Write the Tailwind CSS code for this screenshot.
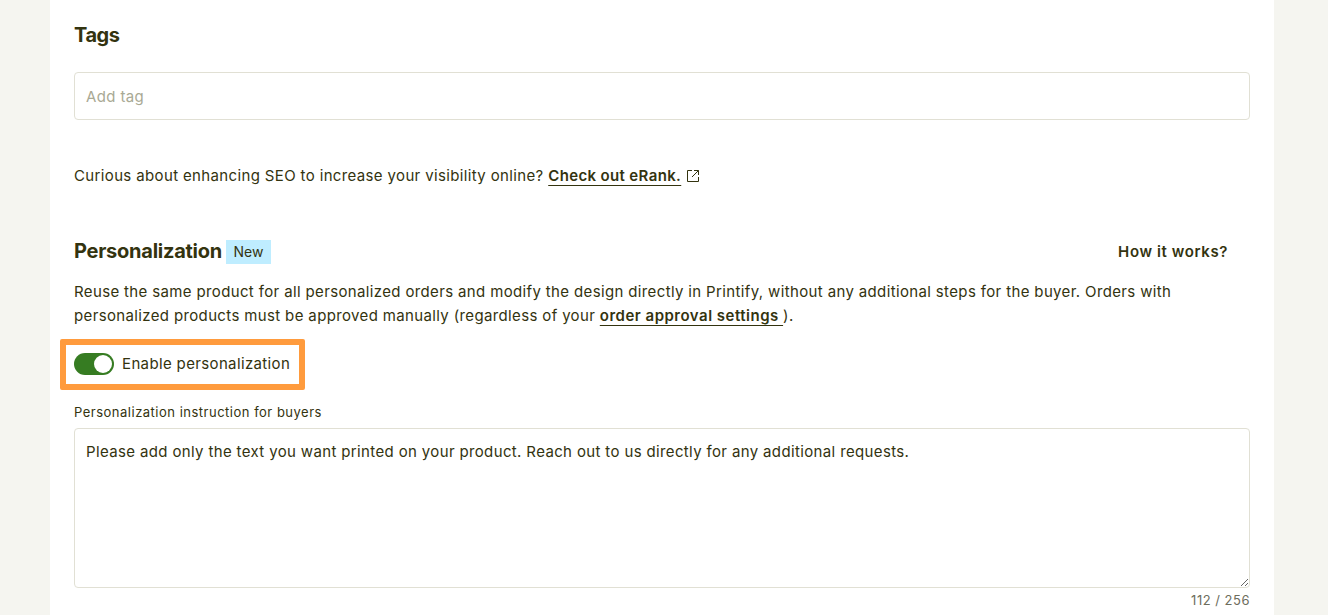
<!DOCTYPE html>
<html lang="en">
<head>
    <meta charset="UTF-8">
    <meta name="viewport" content="width=device-width, initial-scale=1.0">
    <title>Product details</title>
    <script src="https://cdn.jsdelivr.net/npm/@tailwindcss/browser@4"></script>
</head>
<body class="bg-[#f5f5f0] text-[#33330f] font-['Inter',sans-serif] text-[15px] leading-6 tracking-[0.36px] h-[615px] overflow-hidden">
    <div class="ml-[50px] w-[1224px] bg-white px-6 pt-6 h-[615px]">
        <h2 class="text-xl leading-[22px] pb-0.5 font-bold tracking-[-0.45px]">Tags</h2>
        <input type="text" placeholder="Add tag" class="mt-6 block w-full h-12 px-[11px] border border-[#e1e0d4] rounded placeholder:text-[#a9a994] outline-none">
        <p class="mt-11">
            Curious about enhancing SEO to increase your visibility online?
            <a href="#" class="font-semibold underline underline-offset-4">Check out eRank.</a>
            <svg class="inline-block w-[14px] h-[14px] align-[-2px]" viewBox="0 0 14 14" fill="none" stroke="#33330f" stroke-width="1"><path d="M6 1.5H1.5v11h11V8M8 1.5h4.5V6M12.5 1.5 6 8"/></svg>
        </p>
        <div class="mt-[52px] flex items-center justify-between">
            <div class="flex items-center gap-1">
                <h2 class="text-xl leading-[22px] pb-0.5 font-bold tracking-[-0.25px]">Personalization</h2>
                <span class="bg-[#bfedff] w-[45px] text-center h-6 text-sm leading-6 tracking-normal">New</span>
            </div>
            <a href="#" class="font-semibold mr-[22px] tracking-[0.6px]">How it works?</a>
        </div>
        <p class="mt-4">Reuse the same product for all personalized orders and modify the design directly in Printify, without any additional steps for the buyer. Orders with personalized products must be approved manually (regardless of your <a href="#" class="font-semibold underline underline-offset-4 tracking-[0.5px]">order approval settings </a>).</p>
        <div class="relative mt-[25px] flex items-center gap-2 h-[22px]">
            <span class="flex justify-end items-center w-10 h-[22px] rounded-full bg-[#367c22] p-0.5">
                <span class="w-[18px] h-[18px] rounded-full bg-white"></span>
            </span>
            <span>Enable personalization</span>
            <div class="absolute left-[-14px] top-[-14px] w-[245px] h-[51px] border-[6px] border-[#ff9b3d] rounded-[2px]"></div>
        </div>
        <label class="block mt-[27px] text-[13px] leading-[20px] tracking-[0.5px]">Personalization instruction for buyers</label>
        <textarea class="mt-1.5 block w-full h-40 px-[11px] pt-[11px] pb-3 border border-[#e1e0d4] rounded outline-none">Please add only the text you want printed on your product. Reach out to us directly for any additional requests.</textarea>
        <div class="text-right text-[13px] leading-6 text-[#6d6d5c] tracking-[0.5px]">112 / 256</div>
    </div>
</body>
</html>
